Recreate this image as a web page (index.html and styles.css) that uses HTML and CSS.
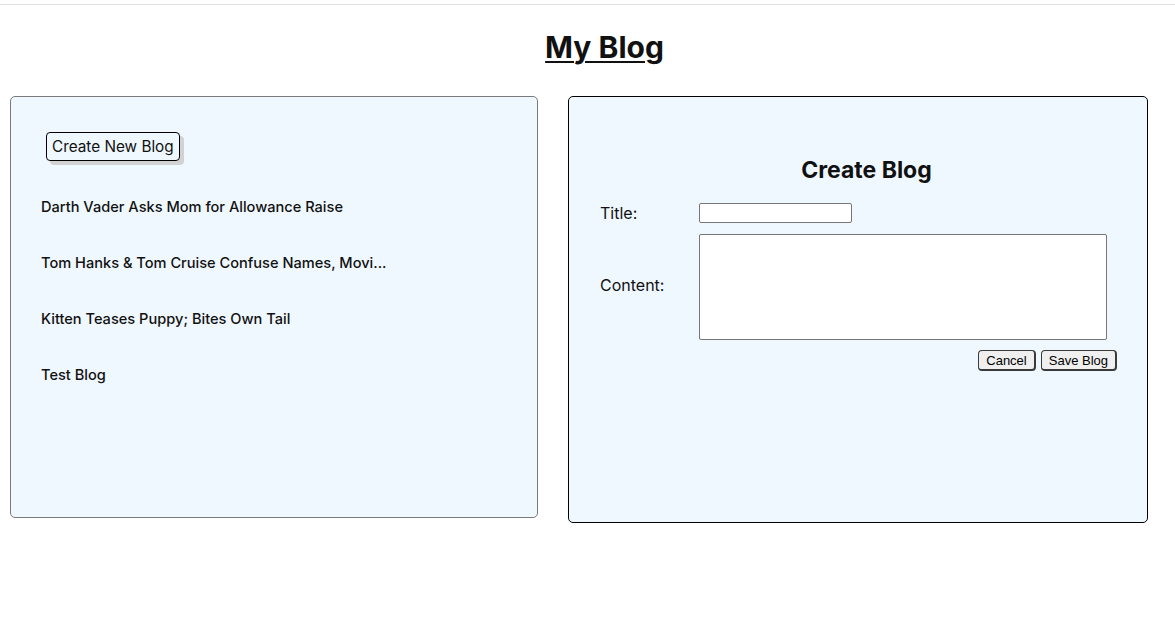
FILE: index.html
```html
<!DOCTYPE html>
<html lang="en">
<head>
    <meta charset="UTF-8">
    <meta name="viewport" content="width=device-width, initial-scale=1.0">
    <title>My Blog</title>
    <link rel="stylesheet" href="styles.css">
</head>
<body>
    <div class="page-top"></div>

    <h1 class="page-title">My Blog</h1>

    <main class="layout">
        <section class="blog-list">
            <button type="button" class="btn-new">Create New Blog</button>
            <ul class="blog-items">
                <li class="blog-item">Darth Vader Asks Mom for Allowance Raise</li>
                <li class="blog-item">Tom Hanks &amp; Tom Cruise Confuse Names, Movi...</li>
                <li class="blog-item">Kitten Teases Puppy; Bites Own Tail</li>
                <li class="blog-item">Test Blog</li>
            </ul>
        </section>

        <section class="blog-editor">
            <h2 class="editor-title">Create Blog</h2>
            <form class="editor-form">
                <label for="title" class="form-label">Title:</label>
                <input type="text" id="title" class="form-input">

                <label for="content" class="form-label form-label-content">Content:</label>
                <textarea id="content" class="form-textarea"></textarea>

                <div class="form-actions">
                    <button type="button" class="btn-small">Cancel</button>
                    <button type="submit" class="btn-small">Save Blog</button>
                </div>
            </form>
        </section>
    </main>
</body>
</html>
```

FILE: styles.css
```css
:root {
    --panel-bg: #f0f8ff;
    --text-main: #111111;
    --border-grey: #7a7a7a;
    --field-border: #767676;
}

* {
    box-sizing: border-box;
}

body {
    margin: 0;
    font-family: Inter, "Noto Sans", sans-serif;
    color: var(--text-main);
    background: #ffffff;
}

.page-top {
    margin-top: 4px;
    border-top: 1px solid #e2e2e2;
}

.page-title {
    margin: 24px 0 31px;
    padding-left: 34px;
    font-size: 30px;
    line-height: 36px;
    font-weight: 700;
    text-align: center;
    text-decoration: underline;
    text-underline-offset: 3px;
    text-decoration-thickness: 2px;
}

.layout {
    display: flex;
    align-items: flex-start;
    gap: 30px;
    padding-left: 10px;
}

/* Left column - list of posts */
.blog-list {
    width: 528px;
    height: 422px;
    padding: 35px 20px 0 30px;
    background: var(--panel-bg);
    border: 1px solid var(--border-grey);
    border-radius: 5px;
}

.btn-new {
    margin: 0 0 18px 5px;
    height: 29px;
    padding: 0 5px;
    font-family: Inter, "Noto Sans", sans-serif;
    font-size: 15.3px;
    color: var(--text-main);
    background: var(--panel-bg);
    border: 1px solid #000000;
    border-radius: 4px;
    box-shadow: 4px 4px 0 #d2d2d2;
    cursor: pointer;
}

.blog-items {
    list-style: none;
    margin: 0;
    padding: 0;
}

.blog-item {
    height: 56px;
    line-height: 56px;
    font-size: 14.6px;
    font-weight: 500;
    white-space: nowrap;
}

/* Right column - editor */
.blog-editor {
    width: 580px;
    height: 427px;
    padding: 60px 30px 0 31px;
    background: var(--panel-bg);
    border: 1px solid #000000;
    border-radius: 5px;
}

.editor-title {
    margin: 0 0 20px;
    padding-left: 16px;
    font-size: 23px;
    line-height: 26px;
    font-weight: 700;
    text-align: center;
}

.editor-form {
    display: grid;
    grid-template-columns: 99px 1fr;
    align-items: center;
    row-gap: 11px;
}

.form-label {
    font-size: 16px;
    line-height: 20px;
    margin-top: -1px;
}

.form-label-content {
    margin-top: -4px;
}

.form-input {
    width: 153px;
    height: 20px;
    padding: 1px 3px;
    background: #ffffff;
    border: 1px solid var(--field-border);
    border-radius: 2px;
}

.form-textarea {
    width: 408px;
    height: 106px;
    margin: 0;
    resize: none;
    background: #ffffff;
    border: 1px solid var(--field-border);
    border-radius: 2px;
}

.form-actions {
    grid-column: 1 / -1;
    display: flex;
    justify-content: flex-end;
    gap: 5px;
    margin-top: -1px;
}

.btn-small {
    height: 21px;
    padding: 0 7px;
    font-family: "Liberation Sans", Arial, sans-serif;
    font-size: 13px;
    color: #000000;
    background: #efefef;
    border: 1px solid #3a3a3a;
    border-bottom-width: 2px;
    border-right-width: 2px;
    border-radius: 4px;
    cursor: pointer;
}
```
